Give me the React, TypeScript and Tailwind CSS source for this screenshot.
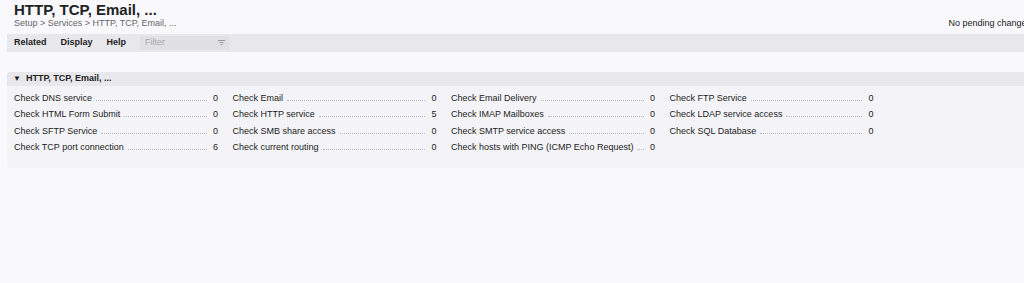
const columns: [string, number][][] = [
  [
    ["Check DNS service", 0],
    ["Check HTML Form Submit", 0],
    ["Check SFTP Service", 0],
    ["Check TCP port connection", 6],
  ],
  [
    ["Check Email", 0],
    ["Check HTTP service", 5],
    ["Check SMB share access", 0],
    ["Check current routing", 0],
  ],
  [
    ["Check Email Delivery", 0],
    ["Check IMAP Mailboxes", 0],
    ["Check SMTP service access", 0],
    ["Check hosts with PING (ICMP Echo Request)", 0],
  ],
  [
    ["Check FTP Service", 0],
    ["Check LDAP service access", 0],
    ["Check SQL Database", 0],
  ],
];

function Entry({ label, count }: { label: string; count: number }) {
  return (
    <div className="flex h-[16.5px] items-center pr-[12px]">
      <span className="whitespace-nowrap text-[#222]">{label}</span>
      <span className="mx-[4px] mt-[4px] flex-1 border-b border-dotted border-[#b8b8bc]" />
      <span className="w-[10px] text-center text-[#222]">{count}</span>
    </div>
  );
}

export default function App() {
  return (
    <div
      className="min-h-[283px] overflow-hidden bg-[#f9f9fd] text-[9px]"
      style={{ fontFamily: '"Liberation Sans", Arial, sans-serif' }}
    >
      <div className="flex items-end justify-between pl-[14px] pt-[1px]">
        <div>
          <h1 className="text-[15px] font-bold leading-[17px] text-[#222]">HTTP, TCP, Email, ...</h1>
          <div className="leading-[10px] text-[#666]">Setup &gt; Services &gt; HTTP, TCP, Email, ...</div>
        </div>
        <div className="-mr-[7px] whitespace-nowrap leading-[10px] text-[#222]">No pending changes</div>
      </div>

      <div className="ml-[7px] mt-[6px] flex h-[18px] items-center gap-[14px] bg-[#e8e8ec] pl-[7px] font-bold text-[#222]">
        <span>Related</span>
        <span>Display</span>
        <span>Help</span>
        <div className="flex h-[14px] w-[89px] items-center justify-between bg-[#e1e1e5] pl-[5px] pr-[4px] font-normal text-[#a8a8ac]">
          <span>Filter</span>
          <svg width="7" height="6" viewBox="0 0 7 6" className="text-[#999]">
            <path d="M0 0.5h7M1.5 2.5h4M2.5 4.5h2" stroke="currentColor" strokeWidth="1" />
          </svg>
        </div>
      </div>

      <div className="ml-[7px] mt-[20px] overflow-hidden rounded-l-[3px]">
        <div className="flex h-[14px] items-center gap-[5px] bg-[#e8e8ec] pl-[6px] font-bold text-[#222]">
          <span className="text-[8px]">▼</span>
          <span>HTTP, TCP, Email, ...</span>
        </div>
        <div className="grid grid-cols-[repeat(4,218.5px)] bg-[#f4f4f8] pb-[12px] pl-[7px] pt-[4px]">
          {columns.map((col, i) => (
            <div key={i}>
              {col.map(([label, count]) => (
                <Entry key={label} label={label} count={count} />
              ))}
            </div>
          ))}
        </div>
      </div>
    </div>
  );
}
